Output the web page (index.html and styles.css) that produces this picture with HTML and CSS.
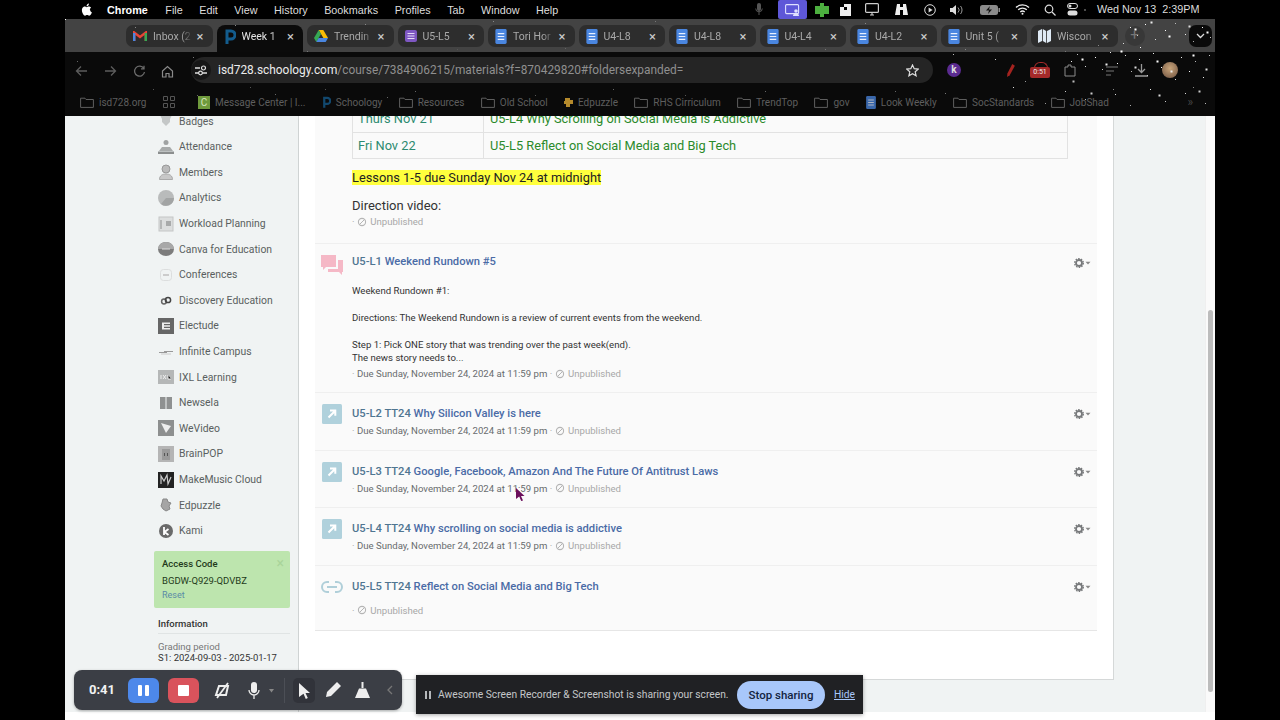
FILE: index.html
```html
<!DOCTYPE html>
<html lang="en">
<head>
    <meta charset="UTF-8">
    <title>Week 1 - Schoology</title>
    <link rel="stylesheet" href="styles.css">
</head>
<body>
<svg class="sprites" width="0" height="0">
    <symbol id="doc" viewBox="0 0 12 16"><rect width="12" height="16" rx="1.5" fill="#4a86e0"/><path d="M2.500 5h7M2.500 8h7M2.500 11h7" stroke="#e8f0fe" stroke-width="1.300"/></symbol>
    <symbol id="folder" viewBox="0 0 14 11"><path d="M.6 1.200h4.400l1 1.300h7.400v7.900H.6z" fill="none" stroke="#5f5f5f"/></symbol>
    <symbol id="ban" viewBox="0 0 10 10"><circle cx="5" cy="5" r="3.600" fill="none" stroke="#b5b5b5" stroke-width="1.100"/><path d="M2.600 7.400l4.800-4.800" stroke="#b5b5b5"/></symbol>
    <symbol id="gear" viewBox="0 0 18 10"><circle cx="5" cy="5" r="3" fill="none" stroke="#77797b" stroke-width="1.800"/><circle cx="5" cy="5" r="4.300" fill="none" stroke="#77797b" stroke-width="1.400" stroke-dasharray="1.500 1.200"/><path d="M11.500 3.800h5l-2.500 2.700z" fill="#888"/></symbol>
    <symbol id="tile" viewBox="0 0 20 20"><rect width="20" height="20" rx="1.500" fill="#b0d1dc"/><path d="M6.500 13.500l6.500-6.500M8 6.500h5.300v5.300" fill="none" stroke="#fff" stroke-width="2"/></symbol>
</svg>

<div class="window">
    <div class="menubar">
        <svg class="apple" width="14" height="15" viewBox="0 0 16 16"><path fill="#fff" d="M11.200 8.400c0-1.600 1.300-2.300 1.400-2.400-.8-1.100-1.900-1.300-2.400-1.300-1-.1-2 .6-2.500.6s-1.300-.6-2.200-.6C4.400 4.700 3.300 5.400 2.700 6.400c-1.200 2.100-.3 5.200.9 6.900.6.800 1.300 1.800 2.200 1.700.9 0 1.200-.6 2.300-.6s1.400.6 2.300.6c1 0 1.600-.8 2.200-1.700.7-1 1-1.900 1-2-.1 0-2.100-.8-2.100-2.900zM9.500 3.400c.5-.6.8-1.400.7-2.200-.7 0-1.500.5-2 1.100-.4.500-.8 1.300-.7 2.100.8.100 1.500-.4 2-1z"/></svg>
        <span class="menu-app">Chrome</span>
        <span>File</span><span>Edit</span><span>View</span><span>History</span><span>Bookmarks</span><span>Profiles</span><span>Tab</span><span>Window</span><span>Help</span>
        <div class="status">
            <svg class="st-mic" width="8" height="13" viewBox="0 0 8 13"><rect x="2" y="0" width="4" height="8" rx="2" fill="#555"/><path d="M.7 5.500a3.300 3.300 0 0 0 6.600 0M4 9v3" fill="none" stroke="#555"/></svg>
            <div class="st-pill"><svg width="16" height="12" viewBox="0 0 16 12"><rect x=".6" y=".6" width="13" height="9" rx="1" fill="none" stroke="#dfe0ff" stroke-width="1.100"/><circle cx="11" cy="7" r="1.800" fill="#dfe0ff"/><path d="M8 12c0-2 1.500-3 3-3s3 1 3 3z" fill="#dfe0ff"/></svg></div>
            <svg class="st-green" width="14" height="14" viewBox="0 0 14 14"><path fill="#4caf3f" d="M5 0h4v3h5v8H9v3H5v-3H0V3h5z"/></svg>
            <svg class="st-one" width="11" height="12" viewBox="0 0 11 12"><path fill="#eee" d="M0 3h4V0h7v12H0z"/><path fill="#000" d="M4 3h3v3H4z"/></svg>
            <svg class="st-mon" width="14" height="13" viewBox="0 0 14 13"><rect x=".6" y=".6" width="12.800" height="8.800" rx="1" fill="none" stroke="#ccc" stroke-width="1.200"/><path d="M5 12h4M7 9.500V12" stroke="#ccc" stroke-width="1.200"/></svg>
            <svg class="st-bino" width="13" height="13" viewBox="0 0 13 13"><path fill="#eee" d="M2 1h3v3h3V1h3l2 11H8V7H5v5H0z"/></svg>
            <svg class="st-play" width="12" height="12" viewBox="0 0 12 12"><circle cx="6" cy="6" r="5.300" fill="none" stroke="#ddd"/><path fill="#ddd" d="M4.600 3.500l4 2.500-4 2.500z"/></svg>
            <svg class="st-vol" width="16" height="12" viewBox="0 0 16 12"><path fill="#ddd" d="M0 4h2.500L6 1v10L2.500 8H0z"/><path d="M8 3.500a3.500 3.500 0 0 1 0 5M10.500 2a6 6 0 0 1 0 8" fill="none" stroke="#999"/></svg>
            <svg class="st-bat" width="20" height="10" viewBox="0 0 20 10"><rect width="18" height="10" rx="2.500" fill="#8a8a8a"/><rect x="18.500" y="3" width="1.500" height="4" fill="#8a8a8a"/><path fill="#111" d="M10 1L6 5.500h3L8 9l4-4.500H9z"/></svg>
            <svg class="st-wifi" width="15" height="11" viewBox="0 0 15 11"><path d="M1 3.500a9.500 9.500 0 0 1 13 0M3.200 5.800a6.300 6.300 0 0 1 8.600 0M5.300 8a3.200 3.200 0 0 1 4.400 0" fill="none" stroke="#eee" stroke-width="1.300"/><circle cx="7.500" cy="9.800" r="1" fill="#eee"/></svg>
            <svg class="st-search" width="12" height="12" viewBox="0 0 12 12"><circle cx="5" cy="5" r="3.800" fill="none" stroke="#ddd" stroke-width="1.200"/><path d="M8 8l3.500 3.500" stroke="#ddd" stroke-width="1.200"/></svg>
            <svg class="st-cc" width="11" height="13" viewBox="0 0 11 13"><rect x=".5" y=".5" width="10" height="5" rx="2.500" fill="none" stroke="#ddd"/><rect x=".5" y="7.500" width="10" height="5" rx="2.500" fill="#ddd"/><circle cx="3" cy="3" r="1.500" fill="#ddd"/></svg>
            <span class="st-dot"></span>
            <span class="st-time">Wed Nov 13&nbsp; 2:39PM</span>
        </div>
    </div>

    <div class="tabstrip">
        <div class="tab">
            <svg class="fav" width="14" height="11" viewBox="0 0 14 11"><path d="M1.200 10V1.500L7 6l5.800-4.500V10" fill="none" stroke="#ea4335" stroke-width="2.400"/><path d="M1.200 10V2" stroke="#4a86e0" stroke-width="2.400"/><path d="M12.800 10V2" stroke="#36a853" stroke-width="2.400"/></svg>
            <span class="tab-name">Inbox (2</span><span class="tab-x">×</span>
        </div>
        <div class="tab active">
            <svg class="fav" width="12" height="15" viewBox="0 0 12 15"><path d="M3 15V2h4a3.500 3.500 0 0 1 0 8H3" fill="none" stroke="#135c8d" stroke-width="3"/></svg>
            <span class="tab-name">Week 1</span><span class="tab-x">×</span>
        </div>
        <div class="tab">
            <svg class="fav" width="14" height="12" viewBox="0 0 14 12"><path fill="#fbbc04" d="M4.700 0h4.600l4.700 8H9.400z"/><path fill="#36a853" d="M4.700 0L0 8l2.300 4 4.700-8z"/><path fill="#4a86e0" d="M4.600 8L2.300 12h9.400L14 8z"/></svg>
            <span class="tab-name">Trendin</span><span class="tab-x">×</span>
        </div>
        <div class="tab">
            <svg class="fav" width="12" height="12" viewBox="0 0 12 12"><rect width="12" height="12" rx="2" fill="#7e57c2"/><path d="M2.500 3.500h7M2.500 6h7M2.500 8.500h7" stroke="#e6dcf7" stroke-width="1.200"/></svg>
            <span class="tab-name">U5-L5</span><span class="tab-x">×</span>
        </div>
        <div class="tab"><svg class="fav" width="12" height="15"><use href="#doc"/></svg><span class="tab-name">Tori Hor</span><span class="tab-x">×</span></div>
        <div class="tab"><svg class="fav" width="12" height="15"><use href="#doc"/></svg><span class="tab-name">U4-L8</span><span class="tab-x">×</span></div>
        <div class="tab"><svg class="fav" width="12" height="15"><use href="#doc"/></svg><span class="tab-name">U4-L8</span><span class="tab-x">×</span></div>
        <div class="tab"><svg class="fav" width="12" height="15"><use href="#doc"/></svg><span class="tab-name">U4-L4</span><span class="tab-x">×</span></div>
        <div class="tab"><svg class="fav" width="12" height="15"><use href="#doc"/></svg><span class="tab-name">U4-L2</span><span class="tab-x">×</span></div>
        <div class="tab"><svg class="fav" width="12" height="15"><use href="#doc"/></svg><span class="tab-name">Unit 5 (</span><span class="tab-x">×</span></div>
        <div class="tab">
            <svg class="fav" width="13" height="14" viewBox="0 0 13 14"><path fill="#dfeaf5" d="M0 2l4-2v12l-4 2zM4.800 0l3.400 2v12l-3.400-2zM9 2l4-2v12l-4 2z"/></svg>
            <span class="tab-name">Wiscon</span><span class="tab-x">×</span>
        </div>
        <span class="tab-new">+</span>
        <span class="tab-list"><svg width="9" height="6" viewBox="0 0 9 6"><path d="M1 1l3.500 3.500L8 1" fill="none" stroke="#ddd" stroke-width="1.300"/></svg></span>
    </div>

    <div class="toolbar">
        <svg class="nav nav-back" width="13" height="12" viewBox="0 0 13 12"><path d="M12 6H2M6 1.500L1.500 6 6 10.500" fill="none" stroke="#5d5d5d" stroke-width="1.300"/></svg>
        <svg class="nav nav-fwd" width="13" height="12" viewBox="0 0 13 12"><path d="M1 6h10M7 1.500L11.500 6 7 10.500" fill="none" stroke="#5d5d5d" stroke-width="1.300"/></svg>
        <svg class="nav nav-reload" width="13" height="13" viewBox="0 0 13 13"><path d="M10.800 3.500A5 5 0 1 0 11.500 7M11 .8v3h-3" fill="none" stroke="#6a6a6a" stroke-width="1.300"/></svg>
        <svg class="nav nav-home" width="13" height="13" viewBox="0 0 13 13"><path d="M1.500 6L6.500 1.500 11.500 6v6H8V8.500H5V12H1.500z" fill="none" stroke="#8a8a8a" stroke-width="1.200"/></svg>
        <div class="omnibox">
            <span class="site-tune"><svg width="12" height="11" viewBox="0 0 12 11"><path d="M0 3h5M0 8h4M7 8h5" stroke="#ddd" stroke-width="1.300" fill="none"/><circle cx="8.500" cy="3" r="2" fill="none" stroke="#ddd" stroke-width="1.200"/><circle cx="5.500" cy="8" r="1.800" fill="none" stroke="#ddd" stroke-width="1.200"/></svg></span>
            <span class="url"><b>isd728.schoology.com</b>/course/7384906215/materials?f=870429820#foldersexpanded=</span>
            <svg class="star" width="13" height="13" viewBox="0 0 13 13"><path d="M6.500 1l1.700 3.700 4 .4-3 2.700.9 4-3.600-2.100-3.600 2.100.9-4-3-2.700 4-.4z" fill="none" stroke="#ddd" stroke-width="1.200"/></svg>
        </div>
        <span class="ext-k">k</span>
        <svg class="ext-pen" width="8" height="13" viewBox="0 0 9 15"><path d="M6 0l3 2-6 11-3 2 .3-4z" fill="#a5231f"/></svg>
        <span class="ext-timer">0:51</span>
        <svg class="ext-puzzle" width="12" height="13" viewBox="0 0 12 13"><path d="M1 3h3V1h3v2h4v9H1z" fill="none" stroke="#8a8a8a"/></svg>
        <svg class="ext-list" width="12" height="10" viewBox="0 0 12 10"><path d="M0 1h12M0 5h8M0 9h5" stroke="#777" stroke-width="1.200"/></svg>
        <svg class="ext-down" width="13" height="13" viewBox="0 0 13 13"><path d="M6.500 0v8M3 5l3.500 3.500L10 5M0 12h13" fill="none" stroke="#9a9a9a" stroke-width="1.300"/></svg>
        <span class="avatar"></span>
    </div>

    <div class="bookmarks">
        <span class="bm"><svg width="14" height="11"><use href="#folder"/></svg>isd728.org</span>
        <span class="bm bm-apps"><svg width="12" height="12" viewBox="0 0 12 12"><path d="M.5.500h4v4h-4zM7.500.500h4v4h-4zM.5 7.500h4v4h-4zM7.500 7.500h4v4h-4z" fill="none" stroke="#555"/></svg></span>
        <span class="bm"><i class="bm-c">C</i>Message Center | I...</span>
        <span class="bm"><svg width="9" height="12" viewBox="0 0 12 15"><path d="M3 15V2h4a3.500 3.500 0 0 1 0 8H3" fill="none" stroke="#12486e" stroke-width="3"/></svg>Schoology</span>
        <span class="bm"><svg width="14" height="11"><use href="#folder"/></svg>Resources</span>
        <span class="bm"><svg width="14" height="11"><use href="#folder"/></svg>Old School</span>
        <span class="bm"><svg width="9" height="11" viewBox="0 0 9 11"><path d="M1 1h5v2h3v4H6v3H2V7H0V4h1z" fill="#b58a2c"/></svg>Edpuzzle</span>
        <span class="bm"><svg width="14" height="11"><use href="#folder"/></svg>RHS Cirriculum</span>
        <span class="bm"><svg width="14" height="11"><use href="#folder"/></svg>TrendTop</span>
        <span class="bm"><svg width="14" height="11"><use href="#folder"/></svg>gov</span>
        <span class="bm"><svg class="bm-doc" width="10" height="13"><use href="#doc"/></svg>Look Weekly</span>
        <span class="bm"><svg width="14" height="11"><use href="#folder"/></svg>SocStandards</span>
        <span class="bm"><svg width="14" height="11"><use href="#folder"/></svg>JobShad</span>
        <span class="bm-more">»</span>
    </div>

    <div class="stars"><i class="stars-dim"></i><i class="stars-bright"></i><i class="stars-big"></i></div>

    <div class="page">
        <div class="page-cols">
            <aside class="sidebar">
                <ul class="side-nav">
                    <li><svg width="16" height="16" viewBox="0 0 16 16"><path fill="#c4c7c7" d="M1 0h14l-3 6v3l-4 4-4-4V6z"/></svg>Badges</li>
                    <li><svg width="16" height="16" viewBox="0 0 16 16"><circle cx="8" cy="3.500" r="2.500" fill="#a0a3a3"/><path fill="#a8abab" d="M4 8h8l3 4H1z"/><path fill="#8b8e8e" d="M0 12.500h16V15H0z"/></svg>Attendance</li>
                    <li><svg width="16" height="16" viewBox="0 0 16 16"><circle cx="8" cy="5" r="4" fill="#bbb" stroke="#999"/><path fill="#c8c8c8" stroke="#aaa" d="M1.500 15.500c0-4 3-5.500 6.500-5.500s6.500 1.500 6.500 5.500z"/></svg>Members</li>
                    <li><svg width="16" height="16" viewBox="0 0 16 16"><circle cx="8" cy="8" r="8" fill="#b9bbbb"/><path fill="#a2a4a4" d="M8 8h8a8 8 0 0 1-13 6z"/></svg>Analytics</li>
                    <li><svg width="16" height="16" viewBox="0 0 16 16"><rect x="1" y="1" width="14" height="14" fill="#dcdede" stroke="#c4c6c6"/><rect x="8" y="5" width="5" height="5" fill="#a8aaaa"/><path d="M3 4v9" stroke="#b5b7b7" stroke-width="2"/></svg>Workload Planning</li>
                    <li><svg width="16" height="16" viewBox="0 0 16 16"><ellipse cx="8" cy="8" rx="8" ry="7" fill="#7c7c7c"/><path fill="#a8a8a8" d="M0 8a8 7 0 0 1 16 0z"/><path d="M4 8h8" stroke="#ddd"/></svg>Canva for Education</li>
                    <li><svg width="16" height="16" viewBox="0 0 16 16"><rect x="2.500" y="2.500" width="11" height="11" rx="3" fill="none" stroke="#dcdede"/><path d="M5 8h6" stroke="#ccc" stroke-width="2"/></svg>Conferences</li>
                    <li><svg width="16" height="16" viewBox="0 0 16 16"><circle cx="6" cy="9.500" r="2.400" fill="none" stroke="#666" stroke-width="1.500"/><circle cx="10" cy="8" r="2.600" fill="none" stroke="#444" stroke-width="1.500"/></svg>Discovery Education</li>
                    <li><svg width="16" height="16" viewBox="0 0 16 16"><rect width="16" height="16" fill="#666"/><path d="M4 4.500h8v1.600H6v1.100h6v1.600H6v1.100h6v1.600H4z" fill="#eee"/></svg>Electude</li>
                    <li><svg width="16" height="16" viewBox="0 0 16 16"><path d="M1 8.500h8M6 7.500h9" stroke="#999"/><path d="M3 10h10" stroke="#ccc"/></svg>Infinite Campus</li>
                    <li><svg width="16" height="16" viewBox="0 0 16 16"><rect y="1" width="16" height="14" fill="#b5b7b7"/><path d="M3 6v4M5 6l3 4M8 6l-3 4M10 6v4h3" stroke="#eee"/></svg>IXL Learning</li>
                    <li><svg width="16" height="16" viewBox="0 0 16 16"><path fill="#8f9191" d="M2 2h5.500v12H2zM8.500 2H14v12H8.500z"/></svg>Newsela</li>
                    <li><svg width="16" height="16" viewBox="0 0 16 16"><rect width="16" height="16" fill="#8d8f8f"/><path fill="#eee" d="M3 3l10 3-5 7z"/></svg>WeVideo</li>
                    <li><svg width="16" height="16" viewBox="0 0 16 16"><rect width="16" height="16" fill="#b5b5b5"/><path d="M4 3v11h8V3" fill="#9a9a9a"/><path d="M6.500 7v3M9.500 7v3" stroke="#555"/></svg>BrainPOP</li>
                    <li><svg width="16" height="16" viewBox="0 0 16 16"><rect width="16" height="16" fill="#222"/><path d="M3 12V4l3 5 3-6 1 9 3-7" fill="none" stroke="#ccc" stroke-width="1.200"/></svg>MakeMusic Cloud</li>
                    <li><svg width="16" height="16" viewBox="0 0 16 16"><path fill="#a5a5a5" stroke="#888" d="M5 2h4l1 3 3 1-2 3 1 3-4 2-3-2-2-3 1-3z"/></svg>Edpuzzle</li>
                    <li><svg width="16" height="16" viewBox="0 0 16 16"><circle cx="8" cy="8" r="7" fill="#6a6a6a"/><path d="M6 4v8M10.500 6L6.500 9l4 3" fill="none" stroke="#fff" stroke-width="1.800"/></svg>Kami</li>
                </ul>
                <div class="access-code">
                    <span class="access-x">×</span>
                    <h4>Access Code</h4>
                    <p>BGDW-Q929-QDVBZ</p>
                    <a>Reset</a>
                </div>
                <div class="side-info">
                    <h4>Information</h4>
                    <div class="info-label">Grading period</div>
                    <div class="info-value">S1: 2024-09-03 - 2025-01-17</div>
                </div>
            </aside>

            <main class="main">
                <div class="panel">
                    <div class="intro">
                        <table class="plan">
                            <tr><td class="day">Thurs Nov 21</td><td>U5-L4 Why Scrolling on Social Media is Addictive</td></tr>
                            <tr><td class="day">Fri Nov 22</td><td>U5-L5 Reflect on Social Media and Big Tech</td></tr>
                        </table>
                        <p class="due"><mark>Lessons 1-5 due Sunday Nov 24 at midnight</mark></p>
                        <p class="direction">Direction video:</p>
                        <div class="meta">· <svg width="10" height="10"><use href="#ban"/></svg> <span class="unpub">Unpublished</span></div>
                    </div>

                    <div class="item item-talk">
                        <svg class="item-icon" width="22" height="22" viewBox="0 0 22 22"><path fill="#f5b8c6" d="M0 1h15v12H5l-3 3v-3H0z"/><path fill="#f5b8c6" d="M17 6h5v12h-1v3l-3-3H7v-3h10z"/></svg>
                        <div class="item-body">
                            <a class="item-title"><span>U5-L1</span> Weekend Rundown #5</a>
                            <div class="item-text">Weekend Rundown #1:<br><br>Directions: The Weekend Rundown is a review of current events from the weekend.<br><br>Step 1: Pick ONE story that was trending over the past week(end).<br>The news story needs to...</div>
                            <div class="meta">· <span class="due-date">Due Sunday, November 24, 2024 at 11:59 pm</span> · <svg width="10" height="10"><use href="#ban"/></svg> <span class="unpub">Unpublished</span></div>
                        </div>
                        <svg class="gear" width="18" height="10"><use href="#gear"/></svg>
                    </div>

                    <div class="item">
                        <svg class="item-icon" width="20" height="20"><use href="#tile"/></svg>
                        <div class="item-body">
                            <a class="item-title"><span>U5-L2 TT24</span> Why Silicon Valley is here</a>
                            <div class="meta">· <span class="due-date">Due Sunday, November 24, 2024 at 11:59 pm</span> · <svg width="10" height="10"><use href="#ban"/></svg> <span class="unpub">Unpublished</span></div>
                        </div>
                        <svg class="gear" width="18" height="10"><use href="#gear"/></svg>
                    </div>

                    <div class="item">
                        <svg class="item-icon" width="20" height="20"><use href="#tile"/></svg>
                        <div class="item-body">
                            <a class="item-title"><span>U5-L3 TT24</span> Google, Facebook, Amazon And The Future Of Antitrust Laws</a>
                            <div class="meta">· <span class="due-date">Due Sunday, November 24, 2024 at 11:59 pm</span> · <svg width="10" height="10"><use href="#ban"/></svg> <span class="unpub">Unpublished</span></div>
                        </div>
                        <svg class="gear" width="18" height="10"><use href="#gear"/></svg>
                    </div>

                    <div class="item">
                        <svg class="item-icon" width="20" height="20"><use href="#tile"/></svg>
                        <div class="item-body">
                            <a class="item-title"><span>U5-L4 TT24</span> Why scrolling on social media is addictive</a>
                            <div class="meta">· <span class="due-date">Due Sunday, November 24, 2024 at 11:59 pm</span> · <svg width="10" height="10"><use href="#ban"/></svg> <span class="unpub">Unpublished</span></div>
                        </div>
                        <svg class="gear" width="18" height="10"><use href="#gear"/></svg>
                    </div>

                    <div class="item item-link">
                        <svg class="item-icon" width="22" height="12" viewBox="0 0 22 12"><path d="M8 1H6a5 5 0 0 0 0 10h2M14 1h2a5 5 0 0 1 0 10h-2M6 6h10" fill="none" stroke="#b0cfd9" stroke-width="2"/></svg>
                        <div class="item-body">
                            <a class="item-title"><span>U5-L5 TT24</span> Reflect on Social Media and Big Tech</a>
                            <div class="meta">· <svg width="10" height="10"><use href="#ban"/></svg> <span class="unpub">Unpublished</span></div>
                        </div>
                        <svg class="gear" width="18" height="10"><use href="#gear"/></svg>
                    </div>
                </div>
            </main>

            <div class="gutter"></div>
            <div class="scrolltrack"><div class="scrollthumb"></div></div>
        </div>
        <div class="page-foot"></div>
    </div>

    <svg class="cursor" width="9" height="13" viewBox="0 0 9 13"><path fill="#6b0f5c" d="M0 0l8.500 8H5l2 4.500-1.800.5-2-4.500L0 11z"/></svg>

    <div class="recorder">
        <span class="rec-time">0:41</span>
        <span class="rec-btn rec-pause"><i></i><i></i></span>
        <span class="rec-btn rec-stop"><i></i></span>
        <svg class="rec-cam" width="16" height="17" viewBox="0 0 16 17"><path d="M5 4h9l-2 9H2z" fill="none" stroke="#eee" stroke-width="2"/><path d="M14 1L3 16" stroke="#eee" stroke-width="1.800"/></svg>
        <svg class="rec-mic" width="12" height="17" viewBox="0 0 12 17"><rect x="3" y="0" width="6" height="11" rx="3" fill="#eee"/><path d="M1 8a5 5 0 0 0 10 0M6 13v4" fill="none" stroke="#eee" stroke-width="1.300"/></svg>
        <svg class="rec-caret" width="5" height="4" viewBox="0 0 5 4"><path d="M0 0h5L2.500 3.500z" fill="#888"/></svg>
        <span class="rec-div"></span>
        <span class="rec-pointer"><svg width="11" height="16" viewBox="0 0 11 16"><path fill="#eee" d="M0 0l11 10H6.500l2.300 5-2 1-2.300-5.200L0 14z"/></svg></span>
        <svg class="rec-pen" width="15" height="15" viewBox="0 0 15 15"><path fill="#eee" d="M11 0l4 4L5 14l-5 1 1-5z"/></svg>
        <svg class="rec-broom" width="15" height="16" viewBox="0 0 15 16"><path fill="#eee" d="M6.500 0h2v6h-2zM4 6.500h7L15 16H0z"/></svg>
        <svg class="rec-back" width="6" height="10" viewBox="0 0 6 10"><path d="M5 1L1 5l4 4" fill="none" stroke="#777" stroke-width="1.300"/></svg>
    </div>

    <div class="sharebar">
        <span class="share-pause"><i></i><i></i></span>
        <span class="share-text">Awesome Screen Recorder &amp; Screenshot is sharing your screen.</span>
        <span class="share-stop">Stop sharing</span>
        <a class="share-hide">Hide</a>
    </div>
</div>
</body>
</html>
```

FILE: styles.css
```css
* {
    box-sizing: border-box;
}

html, body {
    margin: 0;
    height: 720px;
    overflow: hidden;
    background: #000;
}

body {
    font-family: Roboto, "Liberation Sans", sans-serif;
}

.sprites {
    display: block;
    height: 0;
}

.window {
    position: relative;
    display: flex;
    flex-direction: column;
    width: 1150px;
    height: 720px;
    margin: 0 auto;
    overflow: hidden;
    background: #000;
}

/* mac menu bar */
.menubar {
    display: flex;
    align-items: center;
    gap: 16.500px;
    height: 19px;
    padding-left: 15px;
    color: #ddd;
    font-family: "Liberation Sans", sans-serif;
    font-size: 10.800px;
}

.apple {
    margin-right: -3.500px;
}

.menu-app {
    margin-right: 1px;
    font-weight: bold;
    color: #fff;
}

.status {
    position: relative;
    flex: none;
    width: 470px;
    height: 19px;
    margin-left: auto;
}

.status > * {
    position: absolute;
}

.st-mic { left: 10px; top: 3px; }
.st-pill {
    left: 33px;
    top: 0;
    display: flex;
    align-items: center;
    justify-content: center;
    width: 29px;
    height: 19px;
    background: #5e57d8;
    border-radius: 2px;
}
.st-green { left: 70px; top: 3px; }
.st-one { left: 95px; top: 4px; }
.st-mon { left: 120px; top: 3px; }
.st-bino { left: 150px; top: 3px; }
.st-play { left: 179px; top: 4px; }
.st-vol { left: 205px; top: 4px; }
.st-bat { left: 235px; top: 5px; }
.st-wifi { left: 270px; top: 4px; }
.st-search { left: 299px; top: 4px; }
.st-cc { left: 322px; top: 3px; }
.st-dot {
    left: 339px;
    top: 9px;
    width: 2px;
    height: 2px;
    background: #666;
    border-radius: 50%;
}
.st-time {
    left: 352px;
    top: 3px;
    white-space: nowrap;
    color: #ddd;
}

/* tabs */
.tabstrip {
    display: flex;
    align-items: flex-start;
    gap: 4px;
    height: 33px;
    padding: 6px 0 0 61px;
    background: #434343;
}

.tab {
    display: flex;
    align-items: center;
    flex: none;
    width: 86.500px;
    height: 22px;
    padding: 0 9px 0 7px;
    background: #2d2d2d;
    border-radius: 7px;
    color: #a9a9a9;
    font-size: 10.500px;
}

.tab.active {
    height: 27px;
    padding-bottom: 5px;
    background: #0b0b0b;
    border-radius: 8px 8px 0 0;
    color: #e4e4e4;
}

.fav {
    flex: none;
    margin-right: 6px;
}

.tab-name {
    flex: 1;
    overflow: hidden;
    white-space: nowrap;
    -webkit-mask-image: linear-gradient(to right, #000 70%, transparent 100%);
}

.tab-x {
    flex: none;
    margin-left: 4px;
    color: #ccc;
    font-size: 13px;
}

.tab-new {
    flex: none;
    width: 20px;
    height: 20px;
    margin: 1px 0 0 3px;
    border-radius: 50%;
    background: #383838;
    color: #777;
    font-size: 15px;
    line-height: 19px;
    text-align: center;
}

.tab-list {
    display: flex;
    align-items: center;
    justify-content: center;
    width: 23px;
    height: 22px;
    margin-left: auto;
    margin-right: 3px;
    background: #0a0a0a;
    border-radius: 7px;
}

/* address bar row */
.toolbar {
    position: relative;
    height: 38px;
    background: #0a0a0a;
}

.toolbar > svg,
.toolbar > span {
    position: absolute;
}

.nav-back { left: 10px; top: 13px; }
.nav-fwd { left: 39px; top: 13px; }
.nav-reload { left: 68px; top: 13px; }
.nav-home { left: 96px; top: 13px; }

.omnibox {
    position: absolute;
    left: 126px;
    top: 5px;
    display: flex;
    align-items: center;
    width: 742px;
    height: 26px;
    padding: 0 14px 0 0;
    background: #252525;
    border-radius: 13px;
}

.site-tune {
    display: flex;
    align-items: center;
    justify-content: center;
    width: 20px;
    height: 20px;
    margin-right: 7px;
    background: #161616;
    border-radius: 50%;
}

.url {
    flex: 1;
    color: #8f8f8f;
    font-size: 11.900px;
    white-space: nowrap;
}

.url b {
    font-weight: 400;
    color: #ececec;
}

.ext-k {
    left: 882px;
    top: 11px;
    width: 14px;
    height: 14px;
    background: #5b2b91;
    border-radius: 50%;
    color: #ddd;
    font-size: 10px;
    font-weight: bold;
    line-height: 14px;
    text-align: center;
}
.ext-pen { left: 942px; top: 12px; }
.ext-timer {
    left: 965px;
    top: 15px;
    width: 20px;
    height: 11px;
    background: #a52a2a;
    border-radius: 2px;
    color: #eee;
    font-size: 7px;
    line-height: 11px;
    text-align: center;
}
.ext-timer::before {
    content: "";
    position: absolute;
    left: 4px;
    top: -5px;
    width: 12px;
    height: 6px;
    border: 1.500px solid #a52a2a;
    border-bottom: none;
    border-radius: 6px 6px 0 0;
}
.ext-puzzle { left: 999px; top: 12px; }
.ext-list { left: 1041px; top: 14px; }
.ext-down { left: 1070px; top: 12px; }
.avatar {
    left: 1097px;
    top: 10px;
    width: 16px;
    height: 16px;
    background: radial-gradient(circle at 50% 40%, #c9a57a, #6d5140);
    border-radius: 50%;
}

/* bookmarks */
.bookmarks {
    display: flex;
    align-items: center;
    gap: 16.300px;
    height: 26px;
    padding: 0 0 2px 15px;
    background: #0a0a0a;
    color: #5e5e5e;
    font-size: 10px;
    white-space: nowrap;
}

.bm {
    display: flex;
    align-items: center;
    gap: 5px;
}

.bm-apps {
    margin-right: 7px;
}

.bm-c {
    width: 12px;
    height: 13px;
    background: #6f9a3c;
    color: #d5e6bf;
    font-size: 10px;
    font-style: normal;
    line-height: 13px;
    text-align: center;
}

.bm-doc {
    opacity: .75;
}

.bm-more {
    margin-left: auto;
    margin-right: 22px;
    font-size: 12px;
    color: #444;
}

/* specks from the desktop wallpaper show through the title bar */
.stars {
    position: absolute;
    left: 0;
    top: 19px;
    width: 1150px;
    height: 97px;
    pointer-events: none;
}

.stars i {
    position: absolute;
    left: 0;
    top: 0;
    width: 1px;
    height: 1px;
}

.stars-dim {
    background: #777;
    box-shadow: 12px 42px #666, 70px 8px #888, 88px 70px #555, 128px 38px #777, 132px 76px #666, 170px 6px #888, 185px 68px #555, 210px 75px #666, 242px 32px #777, 260px 70px #555, 300px 5px #888, 322px 78px #666, 350px 72px #666, 392px 30px #555, 428px 2px #888, 470px 76px #555, 500px 29px #666, 548px 70px #666, 590px 2px #777, 620px 76px #555, 700px 72px #666, 760px 30px #777, 800px 4px #888, 830px 72px #666, 880px 74px #777, 900px 30px #888, 1000px 32px #777, 1033px 26px #888, 1048px 70px #888, 1128px 68px #888;
}

.stars-bright {
    background: #eee;
    box-shadow: 1065px 8px #eee, 1072px 16px #ccc, 1080px 5px #fff, 1090px 20px #ddd, 1100px 11px #fff, 1110px 4px #bbb, 1120px 15px #eee, 1128px 22px #aaa, 1137px 8px #fff, 1145px 18px #ccc, 1058px 24px #ddd, 1075px 28px #fff, 888px 35px #bbb, 930px 40px #ccc, 948px 68px #ddd, 1006px 42px #eee, 1012px 35px #bbb, 1020px 47px #ddd, 1030px 38px #fff, 1037px 50px #ccc, 1045px 33px #eee, 1052px 44px #fff, 1060px 36px #ddd, 1066px 52px #bbb, 1074px 40px #fff, 1082px 56px #ccc, 1088px 34px #eee, 1096px 48px #fff, 1110px 60px #ddd, 1116px 38px #eee, 1124px 52px #fff, 1130px 42px #bbb, 1138px 58px #eee, 1144px 36px #ccc, 1000px 72px #ccc, 1020px 80px #bbb, 1050px 75px #ddd, 1065px 86px #aaa, 1085px 70px #eee, 1100px 82px #ccc, 1120px 74px #ddd, 1140px 84px #bbb, 980px 84px #999, 960px 62px #999;
}

.stars-big {
    background: #fff;
    box-shadow: 1070px 10px 0 .5px #fff, 1086px 3px 0 .5px #eee, 1104px 17px 0 .5px #fff, 1124px 7px 0 .5px #ddd, 1142px 13px 0 .5px #fff, 1017px 40px 0 .5px #fff, 1041px 45px 0 .5px #eee, 1056px 32px 0 .5px #fff, 1070px 48px 0 .5px #ddd, 1092px 42px 0 .5px #fff, 1106px 52px 0 .5px #eee, 1128px 36px 0 .5px #fff, 1141px 50px 0 .5px #ddd, 1026px 74px 0 .5px #ccc, 1094px 76px 0 .5px #ddd, 1134px 72px 0 .5px #ccc, 1008px 62px 0 .5px #bbb;
}

/* schoology page */
.page {
    display: flex;
    flex: 1;
    flex-direction: column;
    min-height: 0;
    background: #fff;
}

.page-cols {
    display: flex;
    height: 596px;
    background: #f0f3f3;
}

.page-foot {
    height: 8px;
}

.sidebar {
    flex: none;
    width: 234px;
    padding-left: 89px;
    overflow: hidden;
    border-right: 1px solid #cfd3d3;
}

.side-nav {
    width: 136px;
    margin: -7.600px 0 0;
    padding: 0;
    list-style: none;
}

.side-nav li {
    display: flex;
    align-items: center;
    gap: 5px;
    height: 25.600px;
    padding-left: 4px;
    color: #5a5f60;
    font-size: 10.400px;
    white-space: nowrap;
}

.access-code {
    position: relative;
    width: 136px;
    height: 57px;
    margin-top: 7.600px;
    padding: 7px 8px;
    background: #bde5ae;
    border-radius: 2px;
    color: #1f3a1a;
    font-size: 9.500px;
}

.access-code h4 {
    margin: 0 0 5px;
    font-size: 9.500px;
    font-weight: 500;
    line-height: 12px;
}

.access-code p {
    margin: 0 0 3px;
    line-height: 12px;
}

.access-code a {
    display: block;
    color: #5b8aa6;
    font-size: 9px;
    line-height: 11px;
}

.access-x {
    position: absolute;
    right: 6px;
    top: 4px;
    color: #a9d49a;
    font-size: 14px;
    line-height: 16px;
}

.side-info {
    width: 136px;
    padding: 10px 0 0 4px;
}

.side-info h4 {
    margin: 0 0 7px;
    padding-bottom: 3px;
    border-bottom: 1px solid #e0e4e4;
    color: #333;
    font-size: 9.500px;
    font-weight: 500;
    line-height: 12px;
}

.info-label {
    color: #777;
    font-size: 9.500px;
    line-height: 11px;
}

.info-value {
    color: #333;
    font-size: 9.500px;
    line-height: 11px;
    white-space: nowrap;
}

.main {
    flex: none;
    width: 815px;
    height: 564px;
    padding: 0 16px;
    overflow: hidden;
    background: #fff;
    border-right: 1px solid #d5d8d8;
    border-bottom: 1px solid #d5d8d8;
}

.panel {
    background: #fafafa;
    border-bottom: 1px solid #e6e6e6;
}

.intro {
    height: 139px;
    padding-left: 37px;
    border-bottom: 1px solid #efefef;
}

.plan {
    width: 716px;
    margin-top: -11px;
    border-collapse: collapse;
    color: #2b8a2b;
    font-size: 12.800px;
}

.plan td {
    height: 26.500px;
    padding: 0 5px 0 6px;
    border: 1px solid #e2e2e2;
}

.plan .day {
    width: 131px;
    padding-left: 5px;
    color: #2c8a70;
}

.due {
    margin: 11px 0 0;
    color: #222;
    font-size: 12.800px;
    line-height: 16px;
}

.due mark {
    background: #ffff3d;
    color: #222;
}

.direction {
    margin: 12px 0 0;
    color: #333;
    font-size: 13px;
    line-height: 16px;
}

.intro .meta {
    margin-top: 1px;
}

.meta {
    margin-top: 3px;
    color: #aaa;
    font-size: 9.600px;
    line-height: 13px;
    white-space: nowrap;
}

.meta svg {
    vertical-align: -1.500px;
}

.due-date {
    color: #686c6e;
}

.unpub {
    color: #a8a8a8;
    margin-left: 1px;
}

.item {
    position: relative;
    display: flex;
    padding: 14px 0 12.400px 7px;
    border-bottom: 1px solid #efefef;
}

.item:last-child {
    border-bottom: none;
}

.item-icon {
    flex: none;
    margin: -3px 10px 0 0;
}

.item-body {
    flex: 1;
}

.item-title {
    display: block;
    color: #4a6ba6;
    font-size: 11.200px;
    font-weight: 500;
    line-height: 14px;
}

.item-title span {
    color: #4f7591;
}

.item-text {
    margin: 15px 0 0;
    color: #333;
    font-size: 9.600px;
    line-height: 13.400px;
}

.gear {
    position: absolute;
    right: 5px;
    top: 16px;
}

.item-talk {
    padding-top: 11px;
    padding-bottom: 12px;
}

.item-talk .item-icon {
    margin: -1px 9px 0 -1px;
}

.item-talk .gear {
    top: 14px;
}

.item-link {
    padding-bottom: 13px;
}

.item-link .item-icon {
    margin: 1px 9px 0 -1px;
}

.item-link .meta {
    margin-top: 10px;
}

.gutter {
    flex: none;
    width: 91px;
}

.scrolltrack {
    flex: none;
    width: 10px;
    padding: 194px 2px 0 2px;
    background: #fafafa;
    border-left: 1px solid #efefef;
}

.scrollthumb {
    width: 5px;
    height: 382px;
    background: #bcbcbc;
    border-radius: 3px;
}

/* overlays on top of the page */
.cursor {
    position: absolute;
    left: 451px;
    top: 488px;
}

.recorder {
    position: absolute;
    left: 9px;
    top: 670px;
    width: 328px;
    height: 40px;
    background: #3b3e45;
    border-radius: 8px;
    box-shadow: 0 1px 3px rgba(0, 0, 0, .3);
}

.recorder > * {
    position: absolute;
}

.rec-time {
    left: 15px;
    top: 12px;
    color: #f2f2f2;
    font-size: 13px;
    font-weight: 700;
    line-height: 16px;
}

.rec-btn {
    display: flex;
    align-items: center;
    justify-content: center;
    gap: 3px;
    top: 8px;
    width: 31px;
    height: 25px;
    border-radius: 6px;
}

.rec-pause { left: 54px; background: #4d88ea; }
.rec-pause i {
    width: 4px;
    height: 11px;
    background: #fff;
    border-radius: 1px;
}

.rec-stop { left: 94px; background: #d9535c; }
.rec-stop i {
    width: 11px;
    height: 11px;
    background: #fff;
    border-radius: 1px;
}

.rec-cam { left: 140px; top: 12px; }
.rec-mic { left: 174px; top: 12px; }
.rec-caret { left: 195px; top: 19px; }
.rec-div {
    left: 210px;
    top: 8px;
    width: 1px;
    height: 25px;
    background: #4c4f56;
}
.rec-pointer {
    display: flex;
    align-items: center;
    justify-content: center;
    left: 219px;
    top: 8px;
    width: 22px;
    height: 25px;
    background: #31333a;
    border-radius: 5px;
}
.rec-pen { left: 252px; top: 12px; }
.rec-broom { left: 281px; top: 12px; }
.rec-back { left: 313px; top: 15px; }

.sharebar {
    position: absolute;
    left: 351px;
    top: 675px;
    display: flex;
    align-items: center;
    width: 447px;
    height: 39px;
    padding-left: 9px;
    background: #202124;
    box-shadow: 0 1px 4px rgba(0, 0, 0, .35);
    color: #c4c7c9;
    font-size: 10.250px;
    white-space: nowrap;
}

.share-pause {
    display: flex;
    gap: 2px;
    margin-right: 7px;
}

.share-pause i {
    width: 2px;
    height: 8px;
    background: #b5b8bb;
}

.share-text {
    width: 299px;
    flex: none;
}

.share-stop {
    flex: none;
    width: 88px;
    height: 28px;
    background: #a8c7fa;
    border-radius: 14px;
    color: #12233f;
    font-size: 11.500px;
    font-weight: 500;
    line-height: 28px;
    text-align: center;
}

.share-hide {
    margin-left: 9px;
    color: #a8c7fa;
    text-decoration: underline;
}
```
